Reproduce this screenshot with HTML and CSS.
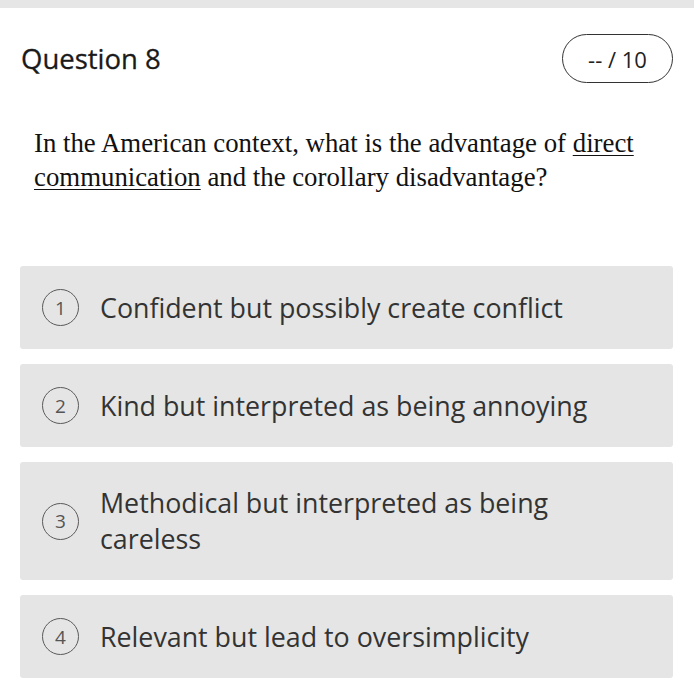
FILE: index.html
```html
<!DOCTYPE html>
<html>
<head>
<meta charset="utf-8">
<link rel="stylesheet" href="styles.css">
</head>
<body>
<div class="topbar"></div>
<div class="header">
  <h1 class="title">Question 8</h1>
  <div class="score">-- / 10</div>
</div>
<p class="question">In the American context, what is the advantage of <u>direct communication</u> and the corollary disadvantage?</p>
<div class="options">
  <div class="option"><span class="num">1</span><span class="label">Confident but possibly create conflict</span></div>
  <div class="option"><span class="num">2</span><span class="label">Kind but interpreted as being annoying</span></div>
  <div class="option"><span class="num">3</span><span class="label">Methodical but interpreted as being careless</span></div>
  <div class="option"><span class="num">4</span><span class="label">Relevant but lead to oversimplicity</span></div>
</div>
</body>
</html>
```
FILE: styles.css
```css
html, body {
  margin: 0;
  padding: 0;
  background: #fff;
}
body {
  width: 694px;
  font-family: "Open Sans", sans-serif;
  color: #222;
}
.topbar {
  height: 8px;
  background: #e6e6e6;
}
.header {
  display: flex;
  align-items: center;
  justify-content: space-between;
  padding: 26px 21px 0 21px;
}
.title {
  margin: 0;
  font-size: 27.5px;
  font-weight: 400;
  line-height: 49px;
  color: #1a1a1a;
  -webkit-text-stroke: 0.3px #1a1a1a;
}
.score {
  box-sizing: border-box;
  width: 111px;
  height: 49px;
  border: 1.5px solid #333;
  border-radius: 25px;
  display: flex;
  align-items: center;
  justify-content: center;
  font-size: 22px;
  color: #222;
}
.question {
  margin: 43px 30px 0 34px;
  font-family: "Liberation Serif", "Times New Roman", serif;
  font-size: 26.8px;
  line-height: 34px;
  color: #111;
}
.question u {
  text-underline-offset: 3px;
  text-decoration-thickness: 1px;
}
.options {
  display: flex;
  flex-direction: column;
  gap: 15px;
  margin: 72px 21px 0 20px;
}
.option {
  display: flex;
  align-items: center;
  gap: 21px;
  background: #e5e5e5;
  border-radius: 3px;
  padding: 23px 60px 23px 22px;
}
.num {
  flex: none;
  box-sizing: border-box;
  width: 37px;
  height: 37px;
  border: 1.5px solid #5a5a5a;
  border-radius: 50%;
  display: flex;
  align-items: center;
  justify-content: center;
  font-size: 19px;
  color: #555;
}
.label {
  font-size: 26.8px;
  line-height: 36px;
  color: #333;
}
```
